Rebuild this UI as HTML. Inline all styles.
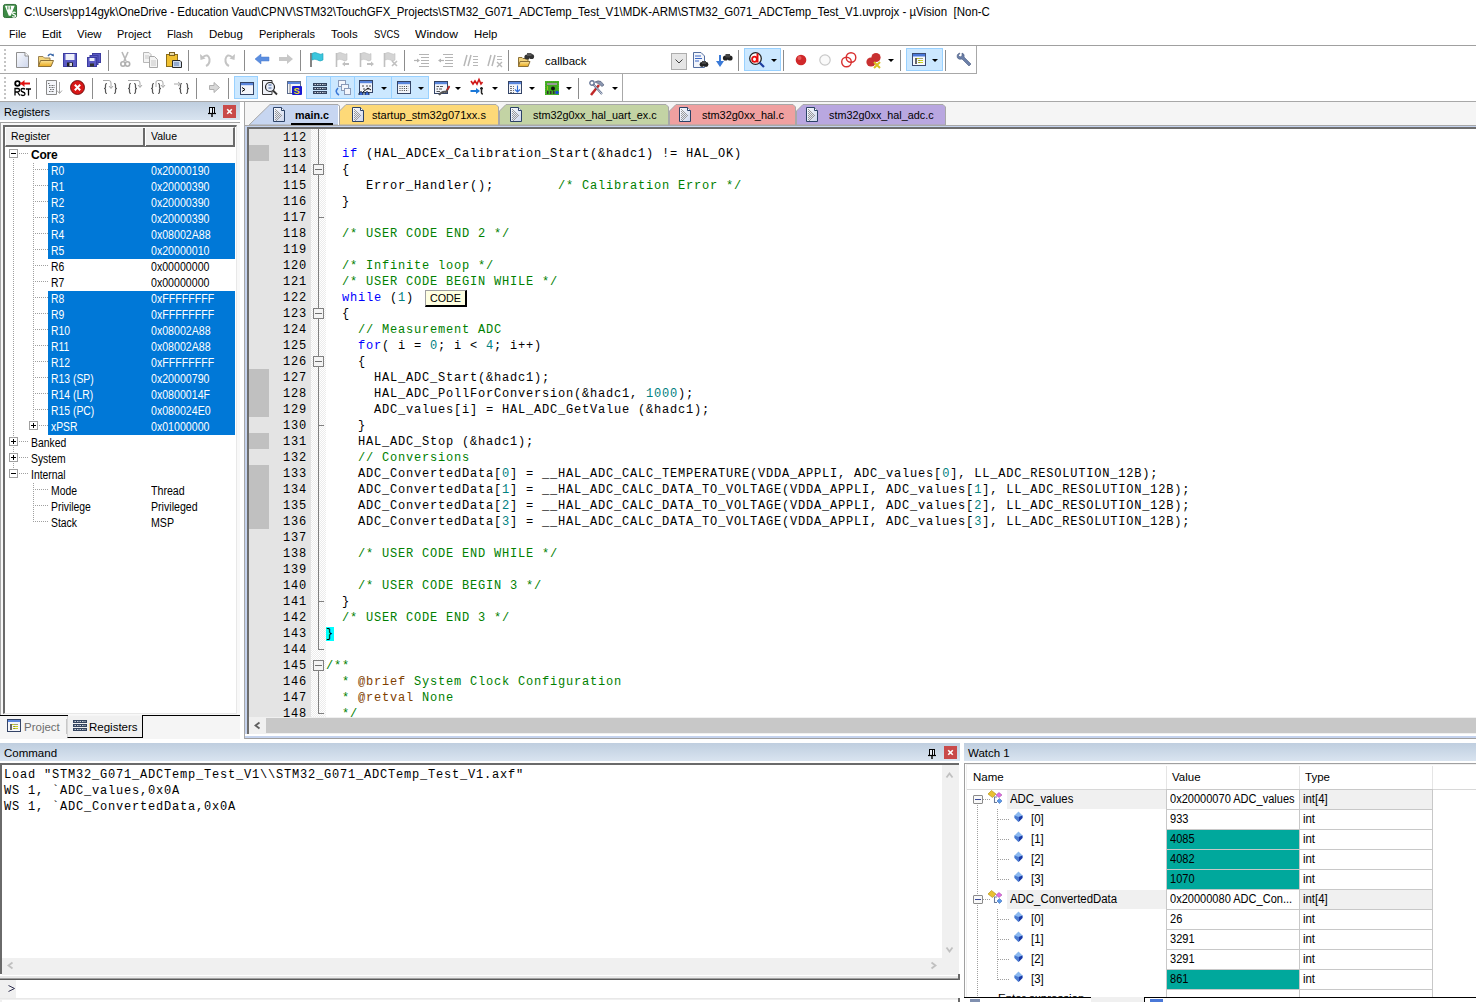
<!DOCTYPE html>
<html><head><meta charset="utf-8"><style>

*{margin:0;padding:0;box-sizing:border-box}
html,body{width:1476px;height:1002px;overflow:hidden;background:#fff;position:relative}
body{font-family:"Liberation Sans",sans-serif;font-size:11.5px;color:#000}
.a{position:absolute}
.t{position:absolute;white-space:pre;line-height:1}
.mono{font-family:"Liberation Mono",monospace}
svg{position:absolute;overflow:visible}


.hl{position:absolute;background:#cce8ff;border:1px solid #99d1ff}
.dd{position:absolute;width:0;height:0;border-left:3px solid transparent;border-right:3px solid transparent;border-top:3px solid #000}


.ttl{position:absolute;height:18px;background:linear-gradient(#bfcedf,#d9e4f0)}
.ttl .t{top:5px}
.closeb{position:absolute;width:13px;height:13px;background:#c94a4a}
.row{position:absolute;height:16px;line-height:16px;white-space:pre}
.dotv{position:absolute;width:1px;background-image:linear-gradient(#a0a0a0 50%,transparent 50%);background-size:1px 2px}
.doth{position:absolute;height:1px;background-image:linear-gradient(90deg,#a0a0a0 50%,transparent 50%);background-size:2px 1px}
.exp{position:absolute;width:9px;height:9px;border:1px solid #a0a0a0;background:#fff}
.exp:before{content:"";position:absolute;left:1px;top:3px;width:5px;height:1px;background:#000}
.exp.plus:after{content:"";position:absolute;left:3px;top:1px;width:1px;height:5px;background:#000}


.code{position:absolute;left:326px;height:16px;line-height:16px;font-family:"Liberation Mono",monospace;font-size:12px;letter-spacing:0.8px;white-space:pre;color:#000}
.ln{position:absolute;left:251px;width:56px;text-align:right;height:16px;line-height:16px;font-family:"Liberation Mono",monospace;font-size:12px;letter-spacing:0.8px;white-space:pre;color:#000}
.kw{color:#0000ff}.nm{color:#008080}.cm{color:#008000}.dc{color:#804000}
.checker{position:absolute;background-color:#fff;background-image:linear-gradient(45deg,#ececec 25%,transparent 25%,transparent 75%,#ececec 75%),linear-gradient(45deg,#ececec 25%,transparent 25%,transparent 75%,#ececec 75%);background-size:2px 2px;background-position:0 0,1px 1px}
.fbox{position:absolute;width:11px;height:11px;border:1px solid #808080;background:#f4f4f4}
.fbox:before{content:"";position:absolute;left:1px;top:4px;width:7px;height:1px;background:#707070}


.cmd{position:absolute;left:4px;height:16px;line-height:18px;font-family:"Liberation Mono",monospace;font-size:12px;letter-spacing:0.8px;white-space:pre;color:#000}


.wrow{position:absolute;height:20px;line-height:18px;white-space:pre;font-size:12px;transform-origin:0 0}

</style></head><body>
<div class="a" style="left:0;top:0;width:1476px;height:45px;background:#fff"></div>
<svg style="left:3px;top:4px" width="14" height="14" viewBox="0 0 15 15">
<rect x="0.5" y="0.5" width="14" height="14" rx="2" fill="#3d8a45" stroke="#2a6a32"/>
<path d="M2 2 H12.5 L8.3 12.5 H6.2 Z" fill="#fff"/>
<path d="M5.2 2.5 V6 M7.8 2.5 V6" stroke="#3d8a45" stroke-width="1.1"/>
<path d="M13.5 9.3 Q12.8 8.6 11.8 8.6 Q10.3 8.6 10.3 9.9 Q10.3 11 11.8 11.3 Q13.4 11.6 13.4 12.8 Q13.4 14 11.8 14 Q10.6 14 10 13.2" fill="none" stroke="#fff" stroke-width="1.3"/>
</svg>
<div class="t" style="left:24px;top:6px;font-size:12.5px;transform:scaleX(0.9191);transform-origin:0 0;">C:\Users\pp14gyk\OneDrive - Education Vaud\CPNV\STM32\TouchGFX_Projects\STM32_G071_ADCTemp_Test_V1\MDK-ARM\STM32_G071_ADCTemp_Test_V1.uvprojx - µVision  [Non-C</div>
<div class="t" style="left:9px;top:29px;font-size:11.5px;transform:scaleX(0.9297);transform-origin:0 0;">File</div>
<div class="t" style="left:42px;top:29px;font-size:11.5px;transform:scaleX(0.9823);transform-origin:0 0;">Edit</div>
<div class="t" style="left:77px;top:29px;font-size:11.5px;transform:scaleX(0.9920);transform-origin:0 0;">View</div>
<div class="t" style="left:117px;top:29px;font-size:11.5px;transform:scaleX(0.9510);transform-origin:0 0;">Project</div>
<div class="t" style="left:167px;top:29px;font-size:11.5px;transform:scaleX(0.9250);transform-origin:0 0;">Flash</div>
<div class="t" style="left:209px;top:29px;font-size:11.5px;transform:scaleX(1.0000);transform-origin:0 0;">Debug</div>
<div class="t" style="left:259px;top:29px;font-size:11.5px;transform:scaleX(0.9614);transform-origin:0 0;">Peripherals</div>
<div class="t" style="left:331px;top:29px;font-size:11.5px;transform:scaleX(0.9907);transform-origin:0 0;">Tools</div>
<div class="t" style="left:374px;top:29px;font-size:11.5px;transform:scaleX(0.8160);transform-origin:0 0;">SVCS</div>
<div class="t" style="left:415px;top:29px;font-size:11.5px;transform:scaleX(1.0488);transform-origin:0 0;">Window</div>
<div class="t" style="left:474px;top:29px;font-size:11.5px;transform:scaleX(0.9895);transform-origin:0 0;">Help</div>
<svg width="0" height="0" style="position:absolute">
<defs>
<linearGradient id="gdoc" x1="0" y1="0" x2="1" y2="1"><stop offset="0" stop-color="#fafbfe"/><stop offset="1" stop-color="#cdd6ec"/></linearGradient>
<linearGradient id="gfold" x1="0" y1="0" x2="0" y2="1"><stop offset="0" stop-color="#fbe49a"/><stop offset="1" stop-color="#e9a91c"/></linearGradient>
<linearGradient id="gtitle" x1="0" y1="0" x2="0" y2="1"><stop offset="0" stop-color="#bfcfe0"/><stop offset="1" stop-color="#dae5f1"/></linearGradient>
</defs></svg>
<div class="a" style="left:0;top:45px;width:1476px;height:1px;background:#a0a0a0"></div>
<div class="a" style="left:0;top:46px;width:977px;height:28px;border-right:1px solid #a8a8a8;border-bottom:1px solid #a8a8a8;background:#fff"></div>
<div class="a" style="left:4px;top:49px;width:2px;height:2px;background:#c4c4c4"></div><div class="a" style="left:4px;top:53px;width:2px;height:2px;background:#c4c4c4"></div><div class="a" style="left:4px;top:57px;width:2px;height:2px;background:#c4c4c4"></div><div class="a" style="left:4px;top:61px;width:2px;height:2px;background:#c4c4c4"></div><div class="a" style="left:4px;top:65px;width:2px;height:2px;background:#c4c4c4"></div><div class="a" style="left:4px;top:69px;width:2px;height:2px;background:#c4c4c4"></div>
<svg style="left:16px;top:52px" width="16" height="16" viewBox="0 0 16 16"><path d="M0.5 0.5 H9 L12.5 4 V15.5 H0.5 Z" fill="url(#gdoc)" stroke="#8f8f8f"/><path d="M9 0.5 V4 H12.5" fill="#fff" stroke="#8f8f8f"/></svg>
<svg style="left:38px;top:52px" width="16" height="16" viewBox="0 0 16 16"><path d="M0.5 4.5 H5 L6.5 6 H12 V14.5 H0.5 Z" fill="#f5d77e" stroke="#9c8250"/><path d="M2.5 8.5 H15.5 L13 14.5 H0.5 Z" fill="url(#gfold)" stroke="#8d7137"/><path d="M10 4 Q12.5 0.5 15 3.5" fill="none" stroke="#3a67a8" stroke-width="1.4"/><path d="M13.2 3.6 L16 4.5 L15.5 1.5Z" fill="#3a67a8"/></svg>
<svg style="left:63px;top:53px" width="16" height="16" viewBox="0 0 16 16"><rect x="0.5" y="0.5" width="13" height="13" fill="#5b5bc4" stroke="#3c3ca0"/><rect x="2.5" y="1" width="9" height="6" fill="#eef0fa"/><rect x="4" y="9.5" width="6" height="4" fill="#222"/><rect x="6.5" y="10" width="2.5" height="3" fill="#ddd"/></svg>
<svg style="left:87px;top:53px" width="16" height="16" viewBox="0 0 16 16"><rect x="5.5" y="0.5" width="8" height="9" fill="#5b5bc4" stroke="#3c3ca0"/><rect x="3" y="2.5" width="8" height="9" fill="#5b5bc4" stroke="#3c3ca0"/><rect x="0.5" y="4.5" width="9" height="9" fill="#5b5bc4" stroke="#3c3ca0"/><rect x="2.5" y="5" width="5" height="3" fill="#eef0fa"/><rect x="3" y="10.5" width="4" height="3" fill="#333"/></svg>
<div class="a" style="left:108px;top:50px;width:1px;height:21px;background:#8c8c8c"></div>
<svg style="left:120px;top:52px" width="11" height="16" viewBox="0 0 11 16"><path d="M2 0 L6 9 M8 0 L4 9" stroke="#b8b8b8" stroke-width="1.6" fill="none"/><circle cx="3" cy="12" r="2.2" fill="none" stroke="#b0b0b0" stroke-width="1.6"/><circle cx="7.5" cy="12" r="2.2" fill="none" stroke="#b0b0b0" stroke-width="1.6"/></svg>
<svg style="left:143px;top:52px" width="16" height="16" viewBox="0 0 16 16"><path d="M0.5 0.5 H6 L8 2.5 V10.5 H0.5Z" fill="#f4f4f4" stroke="#b8b8b8"/><path d="M6.5 4.5 H11.5 L14.5 7.5 V15.5 H6.5Z" fill="#f4f4f4" stroke="#a8a8a8"/><path d="M8 9 H13 M8 11 H13 M8 13 H13 M2 4 H6 M2 6 H6" stroke="#c8c8c8"/></svg>
<svg style="left:166px;top:52px" width="16" height="16" viewBox="0 0 16 16"><rect x="0.5" y="2.5" width="11" height="12" fill="#f0c030" stroke="#8a6d1a"/><rect x="3.5" y="0.5" width="5" height="3" fill="#e8d9a0" stroke="#7a6020"/><path d="M6.5 8.5 H14 L15.5 10 V15.5 H6.5Z" fill="#d0dcee" stroke="#2a2a2a"/><path d="M8 11 H13 M8 13 H13" stroke="#5a7ab0"/></svg>
<div class="a" style="left:188px;top:50px;width:1px;height:21px;background:#8c8c8c"></div>
<svg style="left:200px;top:53px" width="11" height="14" viewBox="0 0 11 14"><path d="M3 4 Q8 0 9.5 6 Q10 11 6 13" fill="none" stroke="#c4c4c4" stroke-width="2"/><path d="M0 1 L0.5 7 L5.5 5.5Z" fill="#c4c4c4"/></svg>
<svg style="left:224px;top:53px" width="11" height="14" viewBox="0 0 11 14"><path d="M8 4 Q3 0 1.5 6 Q1 11 5 13" fill="none" stroke="#c4c4c4" stroke-width="2"/><path d="M11 1 L10.5 7 L5.5 5.5Z" fill="#c4c4c4"/></svg>
<div class="a" style="left:244px;top:50px;width:1px;height:21px;background:#8c8c8c"></div>
<svg style="left:255px;top:54px" width="14" height="10" viewBox="0 0 14 10"><path d="M0 5 L6 0 V3 H14 V7 H6 V10Z" fill="#5b8ee0" stroke="#4a7acc" stroke-width="0.5"/></svg>
<svg style="left:279px;top:54px" width="14" height="10" viewBox="0 0 14 10"><path d="M14 5 L8 0 V3 H0 V7 H8 V10Z" fill="#c8c8c8"/></svg>
<div class="a" style="left:300px;top:50px;width:1px;height:21px;background:#8c8c8c"></div>
<svg style="left:310px;top:52px" width="16" height="16" viewBox="0 0 16 16"><path d="M1 1 V15" stroke="#666" stroke-width="1.6"/><path d="M2 1.5 Q5 -0.5 8 1.5 Q11 3 13 1.5 V8 Q10 10 7.5 8 Q5 6.5 2 8Z" fill="#3cc6dd" stroke="#1aa0b8" stroke-width="0.6"/></svg>
<svg style="left:335px;top:52px" width="16" height="16" viewBox="0 0 16 16"><path d="M1.5 1 V15" stroke="#c0c0c0" stroke-width="1.6"/><path d="M2 1.5 Q5 -0.5 8 1.5 Q11 3 12 1.5 V8 Q10 10 7.5 8 Q5 6.5 2 8Z" fill="#d4d4d4" stroke="#c0c0c0" stroke-width="0.6"/><path d="M7 12 L10 9.5 V11 H14 V13 H10 V14.5Z" fill="#c0c0c0"/></svg>
<svg style="left:359px;top:52px" width="16" height="16" viewBox="0 0 16 16"><path d="M1.5 1 V15" stroke="#c0c0c0" stroke-width="1.6"/><path d="M2 1.5 Q5 -0.5 8 1.5 Q11 3 12 1.5 V8 Q10 10 7.5 8 Q5 6.5 2 8Z" fill="#d4d4d4" stroke="#c0c0c0" stroke-width="0.6"/><path d="M15 12 L12 9.5 V11 H8 V13 H12 V14.5Z" fill="#c0c0c0"/></svg>
<svg style="left:383px;top:52px" width="16" height="16" viewBox="0 0 16 16"><path d="M1.5 1 V15" stroke="#c0c0c0" stroke-width="1.6"/><path d="M2 1.5 Q5 -0.5 8 1.5 Q11 3 12 1.5 V8 Q10 10 7.5 8 Q5 6.5 2 8Z" fill="#d4d4d4" stroke="#c0c0c0" stroke-width="0.6"/><path d="M9 9 L14 14 M14 9 L9 14" stroke="#c0c0c0" stroke-width="1.6"/></svg>
<div class="a" style="left:404px;top:50px;width:1px;height:21px;background:#8c8c8c"></div>
<svg style="left:414px;top:52px" width="16" height="16" viewBox="0 0 16 16"><path d="M5 2.5 H15 M7 5.5 H15 M7 8.5 H15 M7 11.5 H15 M5 14.5 H15" stroke="#b4b4b4" stroke-width="1.2"/><path d="M0 8.5 H5" stroke="#b4b4b4" stroke-width="1.2"/><path d="M3 6.5 L6 8.5 L3 10.5Z" fill="#b4b4b4"/></svg>
<svg style="left:438px;top:52px" width="16" height="16" viewBox="0 0 16 16"><path d="M5 2.5 H15 M7 5.5 H15 M7 8.5 H15 M7 11.5 H15 M5 14.5 H15" stroke="#b4b4b4" stroke-width="1.2"/><path d="M1 8.5 H6" stroke="#b4b4b4" stroke-width="1.2"/><path d="M3 6.5 L0 8.5 L3 10.5Z" fill="#b4b4b4"/></svg>
<svg style="left:463px;top:52px" width="16" height="16" viewBox="0 0 16 16"><path d="M4 3 L1 14 M8 3 L5 14" stroke="#b8b8b8" stroke-width="1.5"/><path d="M10 4.5 H15 M10 7.5 H15 M10 10.5 H15 M10 13.5 H15" stroke="#b8b8b8" stroke-width="1.2"/></svg>
<svg style="left:487px;top:52px" width="16" height="16" viewBox="0 0 16 16"><path d="M4 3 L1 14 M8 3 L5 14" stroke="#b8b8b8" stroke-width="1.5"/><path d="M10 4.5 H15 M10 7.5 H15" stroke="#b8b8b8" stroke-width="1.2"/><path d="M10 10 L15 15 M15 10 L10 15" stroke="#b8b8b8" stroke-width="1.4"/></svg>
<div class="a" style="left:508px;top:50px;width:1px;height:21px;background:#8c8c8c"></div>
<svg style="left:518px;top:52px" width="16" height="16" viewBox="0 0 16 16"><path d="M0.5 5.5 H4 L5 6.5 H10 V14.5 H0.5Z" fill="#f3d37a" stroke="#8d7137"/><path d="M2 9.5 H12 L10 14.5 H0.5Z" fill="url(#gfold)" stroke="#8d7137"/><circle cx="9" cy="5" r="2.6" fill="#333"/><circle cx="13.5" cy="4.5" r="2.6" fill="#333"/><rect x="9" y="1" width="4.5" height="3" fill="#555"/></svg>
<div class="t" style="left:545px;top:56px">callback</div>
<div class="a" style="left:671px;top:53px;width:16px;height:17px;background:#e6e6e6;border:1px solid #adadad"></div>
<svg style="left:675px;top:59px" width="8" height="5" viewBox="0 0 8 5"><path d="M0.5 0.5 L4 4 L7.5 0.5" fill="none" stroke="#404040" stroke-width="1"/></svg>
<svg style="left:693px;top:52px" width="16" height="16" viewBox="0 0 16 16"><path d="M0.5 0.5 H8 L11.5 4 V15.5 H0.5Z" fill="#f2f5fb" stroke="#556fa0"/><path d="M2 4 H8 M2 6.5 H9 M2 9 H6" stroke="#3a66c4"/><circle cx="9" cy="12.5" r="2.4" fill="#222"/><circle cx="13" cy="12.5" r="2.4" fill="#222"/><rect x="9" y="9" width="4" height="3" fill="#444"/></svg>
<svg style="left:716px;top:52px" width="16" height="16" viewBox="0 0 16 16"><path d="M3 3 V9 H0 L4 15 L8 9 H5 V3Z" fill="#3a7ad8"/><circle cx="9.5" cy="6" r="2.6" fill="#222"/><circle cx="14" cy="6" r="2.6" fill="#222"/><rect x="9.5" y="2" width="4.5" height="3.5" fill="#444"/></svg>
<div class="a" style="left:738px;top:50px;width:1px;height:21px;background:#8c8c8c"></div>
<div class="hl" style="left:744px;top:48px;width:37px;height:23px"></div>
<svg style="left:749px;top:52px" width="16" height="16" viewBox="0 0 16 16"><circle cx="6.5" cy="6.5" r="5.8" fill="#fff" stroke="#222" stroke-width="1.3"/><path d="M10.5 10.5 L15 15" stroke="#1f3fa0" stroke-width="2.2"/><path d="M8.5 1.5 V10.5" stroke="#e81010" stroke-width="2"/><ellipse cx="5.5" cy="7.3" rx="2.4" ry="2.6" fill="none" stroke="#e81010" stroke-width="1.8"/></svg>
<div class="dd" style="left:771px;top:59px"></div>
<div class="a" style="left:783px;top:50px;width:1px;height:21px;background:#8c8c8c"></div>
<svg style="left:795px;top:54px" width="12" height="12" viewBox="0 0 12 12"><circle cx="6" cy="6" r="5.3" fill="#d0282a"/><circle cx="4.5" cy="4" r="2" fill="#ef7070" opacity="0.7"/></svg>
<svg style="left:819px;top:54px" width="12" height="12" viewBox="0 0 12 12"><circle cx="6" cy="6" r="5.2" fill="#fafafa" stroke="#c8c8c8" stroke-width="1.2"/></svg>
<svg style="left:841px;top:52px" width="16" height="16" viewBox="0 0 16 16"><circle cx="5.5" cy="10" r="4.8" fill="#fff" stroke="#d83030" stroke-width="1.4"/><circle cx="10" cy="5.5" r="4.8" fill="none" stroke="#d83030" stroke-width="1.4"/></svg>
<svg style="left:866px;top:52px" width="16" height="16" viewBox="0 0 16 16"><circle cx="5" cy="10" r="4.6" fill="#c83030"/><circle cx="10" cy="5.5" r="4.6" fill="#c83030"/><path d="M8 10 L14 16 M14 10 L8 16" stroke="#d8c020" stroke-width="2"/></svg>
<div class="dd" style="left:888px;top:59px"></div>
<div class="a" style="left:900px;top:50px;width:1px;height:21px;background:#8c8c8c"></div>
<div class="hl" style="left:906px;top:48px;width:37px;height:23px"></div>
<svg style="left:912px;top:53px" width="14" height="13" viewBox="0 0 14 13"><rect x="0.5" y="0.5" width="13" height="12" fill="#f6f8fc" stroke="#3a4a70"/><rect x="1" y="1" width="12" height="2.5" fill="#4a78d8"/><path d="M4.5 5.5 H7 M6 7.5 H11 M6 9.5 H11" stroke="#c8d020" stroke-width="1"/><path d="M7 5.5 H11 M6.5 7.5 H8 M6.5 9.5 H8" stroke="#707020" stroke-width="1" opacity="0.6"/><path d="M3.5 5 V11 M4.5 5 V11" stroke="#444" stroke-width="0.8"/></svg>
<div class="dd" style="left:932px;top:59px"></div>
<div class="a" style="left:945px;top:50px;width:1px;height:21px;background:#8c8c8c"></div>
<svg style="left:956px;top:52px" width="16" height="16" viewBox="0 0 16 16"><path d="M4 1 Q0 2 1.5 6 Q3 8 6 7 L13 14 L15 12 L8 5 Q9 2 6 1 L6 4 L4 5 L2.5 3.5Z" fill="#6b7fa8" stroke="#4a5a80" stroke-width="0.6"/></svg>
<div class="a" style="left:0;top:74px;width:623px;height:28px;border-right:1px solid #a8a8a8;border-bottom:1px solid #a8a8a8;background:#fff"></div>
<div class="a" style="left:623px;top:101px;width:853px;height:1px;background:#a8a8a8"></div>
<div class="a" style="left:4px;top:77px;width:2px;height:2px;background:#c4c4c4"></div><div class="a" style="left:4px;top:81px;width:2px;height:2px;background:#c4c4c4"></div><div class="a" style="left:4px;top:85px;width:2px;height:2px;background:#c4c4c4"></div><div class="a" style="left:4px;top:89px;width:2px;height:2px;background:#c4c4c4"></div><div class="a" style="left:4px;top:93px;width:2px;height:2px;background:#c4c4c4"></div><div class="a" style="left:4px;top:97px;width:2px;height:2px;background:#c4c4c4"></div>
<svg style="left:14px;top:80px" width="17" height="16" viewBox="0 0 17 16"><circle cx="3.5" cy="3.5" r="2.3" fill="#fff" stroke="#000" stroke-width="1.8"/><path d="M6 3.5 H16" stroke="#e01010" stroke-width="2"/><path d="M6.5 3.5 L10.5 0 V7Z" fill="#e01010"/><path d="M1 15.5 V8.5 H3.8 Q5.5 8.5 5.5 10.2 Q5.5 12 3.8 12 H1 M3.5 12 L5.8 15.5" fill="none" stroke="#000" stroke-width="1.3"/><path d="M11 9.3 Q10.5 8.5 9 8.5 Q7 8.5 7 10 Q7 11.5 9 12 Q11 12.5 11 14 Q11 15.5 9 15.5 Q7.3 15.5 6.8 14.5" fill="none" stroke="#000" stroke-width="1.3"/><path d="M12 9 H17 M14.5 9 V15.5" fill="none" stroke="#000" stroke-width="1.3"/></svg>
<div class="a" style="left:36px;top:78px;width:1px;height:21px;background:#8c8c8c"></div>
<svg style="left:46px;top:80px" width="17" height="15" viewBox="0 0 17 15"><path d="M0.5 0.5 H10.5 V14.5 H0.5Z" fill="#f4f6fa" stroke="#8a8a8a"/><path d="M2 3.5 H4 M3 5.5 H9 M3 7.5 H9 M4 9.5 H8 M3 11.5 H8" stroke="#707070" stroke-width="1" stroke-dasharray="1 0.5"/><path d="M13.5 2 V13 M11 10.5 L13.5 13.5 L16 10.5" fill="none" stroke="#a8a8a8"/></svg>
<svg style="left:70px;top:80px" width="15" height="15" viewBox="0 0 15 15"><circle cx="7.5" cy="7.5" r="7" fill="#d81818" stroke="#500" stroke-width="0.8"/><path d="M4.8 4.8 L10.2 10.2 M10.2 4.8 L4.8 10.2" stroke="#fff" stroke-width="2"/></svg>
<div class="a" style="left:92px;top:78px;width:1px;height:21px;background:#8c8c8c"></div>
<svg style="left:103px;top:79px" width="16" height="16" viewBox="0 0 16 16"><path d="M4 4.5 Q2.5 4.5 2.5 6 V8.5 Q2.5 9.5 1 9.5 Q2.5 9.5 2.5 10.5 V13 Q2.5 14.5 4 14.5" fill="none" stroke="#555" stroke-width="1.2"/><path d="M11 4.5 Q12.5 4.5 12.5 6 V8.5 Q12.5 9.5 14 9.5 Q12.5 9.5 12.5 10.5 V13 Q12.5 14.5 11 14.5" fill="none" stroke="#555" stroke-width="1.2"/><path d="M0 1.5 H6 Q8 1.5 8 4 V9 M6 7 L8 9.5 L10 7" fill="none" stroke="#a8a8a8"/></svg>
<svg style="left:127px;top:79px" width="16" height="16" viewBox="0 0 16 16"><path d="M4 4.5 Q2.5 4.5 2.5 6 V8.5 Q2.5 9.5 1 9.5 Q2.5 9.5 2.5 10.5 V13 Q2.5 14.5 4 14.5" fill="none" stroke="#555" stroke-width="1.2"/><path d="M7 4.5 Q8.5 4.5 8.5 6 V8.5 Q8.5 9.5 10 9.5 Q8.5 9.5 8.5 10.5 V13 Q8.5 14.5 7 14.5" fill="none" stroke="#555" stroke-width="1.2"/><path d="M1 1.5 H11 Q13 1.5 13 4 V8 M11 6 L13 8.5 L15 6" fill="none" stroke="#a8a8a8"/></svg>
<svg style="left:150px;top:79px" width="16" height="16" viewBox="0 0 16 16"><path d="M4 4.5 Q2.5 4.5 2.5 6 V8.5 Q2.5 9.5 1 9.5 Q2.5 9.5 2.5 10.5 V13 Q2.5 14.5 4 14.5" fill="none" stroke="#555" stroke-width="1.2"/><path d="M8 4.5 Q9.5 4.5 9.5 6 V8.5 Q9.5 9.5 11 9.5 Q9.5 9.5 9.5 10.5 V13 Q9.5 14.5 8 14.5" fill="none" stroke="#555" stroke-width="1.2"/><path d="M6 8 V3 Q6 1.5 8 1.5 H11 Q13 1.5 13 4 V8 M11 6 L13 8.5 L15 6" fill="none" stroke="#a8a8a8"/></svg>
<svg style="left:174px;top:79px" width="16" height="16" viewBox="0 0 16 16"><path d="M8 4.5 Q6.5 4.5 6.5 6 V8.5 Q6.5 9.5 5 9.5 Q6.5 9.5 6.5 10.5 V13 Q6.5 14.5 8 14.5" fill="none" stroke="#555" stroke-width="1.2"/><path d="M12 4.5 Q13.5 4.5 13.5 6 V8.5 Q13.5 9.5 15 9.5 Q13.5 9.5 13.5 10.5 V13 Q13.5 14.5 12 14.5" fill="none" stroke="#555" stroke-width="1.2"/><path d="M0 5 H6 M4 3 L6.5 5 L4 7" fill="none" stroke="#a8a8a8"/></svg>
<div class="a" style="left:196px;top:78px;width:1px;height:21px;background:#8c8c8c"></div>
<svg style="left:209px;top:82px" width="11" height="11" viewBox="0 0 11 11"><path d="M0.5 3.5 H5 V0.5 L10.5 5.5 L5 10.5 V7.5 H0.5Z" fill="#d8d8d8" stroke="#b0b0b0"/></svg>
<div class="a" style="left:228px;top:78px;width:1px;height:21px;background:#8c8c8c"></div>
<div class="hl" style="left:234px;top:76px;width:24px;height:23px"></div>
<svg style="left:240px;top:82px" width="14" height="13" viewBox="0 0 14 13"><rect x="0.5" y="0.5" width="13" height="12" fill="#f3f5fa" stroke="#344466"/><rect x="1" y="1" width="12" height="2.2" fill="#5a86dc"/><path d="M2 5.5 L5 7.5 L2 9.5" fill="none" stroke="#000" stroke-width="1"/></svg>
<svg style="left:262px;top:80px" width="16" height="16" viewBox="0 0 16 16"><path d="M0.5 0.5 H10 V14.5 H0.5Z" fill="#f0f2f8" stroke="#333"/><circle cx="8" cy="7" r="4.5" fill="#e8eef8" stroke="#222" stroke-width="1.2"/><path d="M6.5 5 H9.5 M6.5 8 H9.5" stroke="#3a5a9a" stroke-width="1.2"/><path d="M11 10.5 L15 14.5" stroke="#333" stroke-width="1.8"/></svg>
<svg style="left:287px;top:81px" width="16" height="15" viewBox="0 0 16 15"><rect x="0.5" y="0.5" width="13" height="12" fill="#f3f5fa" stroke="#5a6a8a"/><rect x="1" y="1" width="12" height="2" fill="#5a86dc"/><path d="M3 3 V12" stroke="#888"/><rect x="5" y="5" width="10" height="9" rx="1" fill="#1a1ad0"/><text x="6.6" y="13" font-family="Liberation Sans" font-weight="bold" font-size="9.5" fill="#f0e020">S</text></svg>
<div class="hl" style="left:306px;top:76px;width:123px;height:23px"></div>
<div class="a" style="left:330px;top:77px;width:1px;height:21px;background:#99d1ff"></div>
<div class="a" style="left:354px;top:77px;width:1px;height:21px;background:#99d1ff"></div>
<div class="a" style="left:391px;top:77px;width:1px;height:21px;background:#99d1ff"></div>
<svg style="left:313px;top:83px" width="14" height="12" viewBox="0 0 14 12"><rect x="0" y="0" width="14" height="3" fill="#34445e"/><rect x="0" y="4" width="14" height="3" fill="#34445e"/><rect x="0" y="8" width="14" height="3" fill="#34445e"/><path d="M1.5 1.5 H12.5 M1.5 5.5 H12.5 M1.5 9.5 H12.5" stroke="#c8cfd8" stroke-width="1" stroke-dasharray="1.5 1"/></svg>
<svg style="left:335px;top:80px" width="16" height="16" viewBox="0 0 16 16"><rect x="3.5" y="0.5" width="7" height="6" fill="#f4f6fb" stroke="#8a9ab8"/><rect x="6.5" y="4.5" width="7" height="6" fill="#f4f6fb" stroke="#8a9ab8"/><rect x="9.5" y="8.5" width="6" height="6" fill="#f4f6fb" stroke="#8a9ab8"/><path d="M3 8 Q-1 12 4 15" fill="none" stroke="#3a78d8" stroke-width="1.6"/></svg>
<svg style="left:359px;top:80px" width="16" height="16" viewBox="0 0 16 16"><rect x="0.5" y="0.5" width="13" height="12" fill="#f3f5fa" stroke="#344466"/><rect x="1" y="1" width="12" height="2.2" fill="#5a86dc"/><path d="M3 6 H5 M7 6 H9 M10 6 H12 M4 9 H6 M8 9 H10" stroke="#444"/><path d="M0 15 V13 Q2 10 4 13 V15 M6 15 V13 Q8 10 10 13 V15" fill="#3a6ad8" stroke="#111" stroke-width="0.8"/><path d="M4 12 L9 8 L12 10" fill="none" stroke="#111"/></svg>
<div class="dd" style="left:381px;top:87px"></div>
<svg style="left:397px;top:81px" width="14" height="13" viewBox="0 0 14 13"><rect x="0.5" y="0.5" width="13" height="12" fill="#f3f5fa" stroke="#344466"/><rect x="1" y="1" width="12" height="2.2" fill="#5a86dc"/><path d="M2.5 5.5 H11.5 M2.5 7.5 H11.5 M2.5 9.5 H11.5" stroke="#444" stroke-dasharray="1 1.2"/></svg>
<div class="dd" style="left:418px;top:87px"></div>
<svg style="left:434px;top:81px" width="16" height="16" viewBox="0 0 16 16"><rect x="0.5" y="0.5" width="13" height="12" fill="#f3f5fa" stroke="#344466"/><rect x="1" y="1" width="12" height="2.2" fill="#5a86dc"/><path d="M2.5 5.5 H5 M6 5.5 H9 M2.5 8 H4 M5 8 H8 M2.5 10.5 H6" stroke="#555"/><path d="M5 14 Q8 10 12 11 L15 6" fill="none" stroke="#555" stroke-width="2"/><path d="M13 9 L15.5 5" stroke="#c02020" stroke-width="1.6"/></svg>
<div class="dd" style="left:455px;top:87px"></div>
<svg style="left:470px;top:79px" width="16" height="16" viewBox="0 0 16 16"><path d="M1 2 L3 5 L5 2 L7 5 L9 0.5 L11 5 L12.5 3" fill="none" stroke="#d01818" stroke-width="1.6"/><path d="M0.5 12 H7" stroke="#1a78d8" stroke-width="2"/><path d="M6 9 L10 12 L6 15Z" fill="#1a78d8"/><path d="M11.5 8 V14 Q11.5 15 13 15 M10 9.5 H13" fill="none" stroke="#222" stroke-width="1.5"/></svg>
<div class="dd" style="left:492px;top:87px"></div>
<svg style="left:508px;top:81px" width="14" height="13" viewBox="0 0 14 13"><rect x="0.5" y="0.5" width="13" height="12" fill="#f3f5fa" stroke="#344466"/><rect x="1" y="1" width="12" height="2.2" fill="#5a86dc"/><path d="M2 5.5 H4 M5 5.5 H6 M2 7.5 H4 M5 7.5 H6 M2 9.5 H4 M5 9.5 H6 M2 11.5 H4 M5 11.5 H6" stroke="#555" stroke-width="0.8"/><path d="M9.5 4.5 V11 M7 8.5 L9.5 11 L12 8.5" fill="none" stroke="#2a6ad8" stroke-width="1.1"/></svg>
<div class="dd" style="left:529px;top:87px"></div>
<svg style="left:545px;top:81px" width="14" height="14" viewBox="0 0 14 14"><rect x="0" y="0" width="14" height="14" fill="#40a820"/><rect x="0.7" y="0.7" width="12.6" height="12.6" fill="none" stroke="#6ad040" stroke-width="0.6" stroke-dasharray="1 1"/><rect x="2" y="2" width="10" height="2" fill="#999"/><circle cx="8" cy="7.5" r="2" fill="#111"/><path d="M2 6 H3 M2 8 H3" stroke="#f0e020"/><rect x="2" y="10" width="1.5" height="3" fill="#333"/><rect x="5" y="10" width="1.5" height="3" fill="#333"/><rect x="8" y="10" width="1.5" height="3" fill="#333"/><circle cx="12" cy="11.5" r="1.8" fill="#1a4ad8"/></svg>
<div class="dd" style="left:566px;top:87px"></div>
<div class="a" style="left:578px;top:78px;width:1px;height:21px;background:#8c8c8c"></div>
<svg style="left:589px;top:80px" width="16" height="16" viewBox="0 0 16 16"><path d="M2 15 L10 5" stroke="#c02828" stroke-width="2.5"/><path d="M4 4 L13 14" stroke="#5a6a8a" stroke-width="2" /><path d="M4 4 L13 14" stroke="#e8ecf4" stroke-width="0.8"/><path d="M6 2 Q9 0 12 1.5 L15 5 L13 6.5 L10 4 Z" fill="#8a96b0" stroke="#4a5670" stroke-width="0.6"/><circle cx="3" cy="3" r="2.2" fill="none" stroke="#6a7a9a" stroke-width="1.4"/></svg>
<div class="dd" style="left:612px;top:87px"></div>
<div class="ttl" style="left:0;top:102px;width:240px"><div class="t" style="left:4px;top:5px;font-size:11.5px;transform:scaleX(0.945);transform-origin:0 0">Registers</div></div>
<svg style="left:208px;top:107px" width="8" height="10" viewBox="0 0 8 10"><rect x="1.5" y="0.5" width="5" height="6" fill="#e8eef6" stroke="#000" stroke-width="1"/><path d="M4.5 1 V6" stroke="#000" stroke-width="1"/><path d="M0 6.5 H8" stroke="#000" stroke-width="1.2"/><path d="M4 7 V10" stroke="#000" stroke-width="1.4"/></svg>
<div class="closeb" style="left:223px;top:105px"></div><svg style="left:223px;top:105px" width="13" height="13"><path d="M4.2 4.2 L8.8 8.8 M8.8 4.2 L4.2 8.8" stroke="#fff" stroke-width="1.6"/></svg>
<div class="a" style="left:240px;top:102px;width:4px;height:638px;background:#fff"></div>
<div class="a" style="left:244px;top:102px;width:1px;height:638px;background:#a8a8a8"></div>
<div class="a" style="left:0;top:120px;width:240px;height:2px;background:#fff"></div>
<div class="a" style="left:0;top:122px;width:240px;height:594px;background:#f8f8f8;border-top:1px solid #a0a0a0;border-left:1px solid #a8a8a8"></div>
<div class="a" style="left:3px;top:125px;width:234px;height:589px;background:#fff;border-top:2px solid #6a6a6a;border-left:2px solid #6a6a6a;border-right:1px solid #e8e8e8;border-bottom:1px solid #e8e8e8"></div>
<div class="a" style="left:5px;top:127px;width:230px;height:20px;background:#f0f0f0;border-top:1px solid #fff;border-left:1px solid #fff;border-bottom:2px solid #6a6a6a;border-right:2px solid #6a6a6a"></div>
<div class="a" style="left:143px;top:128px;width:2px;height:18px;background:#6a6a6a"></div>
<div class="a" style="left:145px;top:128px;width:1px;height:18px;background:#fff"></div>
<div class="t" style="left:11px;top:131px;transform:scaleX(0.91);transform-origin:0 0">Register</div>
<div class="t" style="left:151px;top:131px;transform:scaleX(0.91);transform-origin:0 0">Value</div>
<div class="dotv" style="left:13px;top:159px;height:316px"></div>
<div class="dotv" style="left:33px;top:163px;height:264px"></div>
<div class="dotv" style="left:33px;top:483px;height:40px"></div>
<div class="exp" style="left:9px;top:149px"></div>
<div class="doth" style="left:19px;top:153px;width:10px"></div>
<div class="row" style="left:31px;top:147px;font-weight:bold;font-size:12px;letter-spacing:-0.2px">Core</div>
<div class="a" style="left:48px;top:163px;width:187px;height:16px;background:#0078d7"></div>
<div class="doth" style="left:35px;top:169px;width:13px"></div>
<div class="row" style="left:51px;top:163px;color:#fff;font-size:12px;transform:scaleX(0.865);transform-origin:0 0">R0</div>
<div class="row" style="left:151px;top:163px;color:#fff;font-size:12px;transform:scaleX(0.885);transform-origin:0 0">0x20000190</div>
<div class="a" style="left:48px;top:179px;width:187px;height:16px;background:#0078d7"></div>
<div class="doth" style="left:35px;top:185px;width:13px"></div>
<div class="row" style="left:51px;top:179px;color:#fff;font-size:12px;transform:scaleX(0.865);transform-origin:0 0">R1</div>
<div class="row" style="left:151px;top:179px;color:#fff;font-size:12px;transform:scaleX(0.885);transform-origin:0 0">0x20000390</div>
<div class="a" style="left:48px;top:195px;width:187px;height:16px;background:#0078d7"></div>
<div class="doth" style="left:35px;top:201px;width:13px"></div>
<div class="row" style="left:51px;top:195px;color:#fff;font-size:12px;transform:scaleX(0.865);transform-origin:0 0">R2</div>
<div class="row" style="left:151px;top:195px;color:#fff;font-size:12px;transform:scaleX(0.885);transform-origin:0 0">0x20000390</div>
<div class="a" style="left:48px;top:211px;width:187px;height:16px;background:#0078d7"></div>
<div class="doth" style="left:35px;top:217px;width:13px"></div>
<div class="row" style="left:51px;top:211px;color:#fff;font-size:12px;transform:scaleX(0.865);transform-origin:0 0">R3</div>
<div class="row" style="left:151px;top:211px;color:#fff;font-size:12px;transform:scaleX(0.885);transform-origin:0 0">0x20000390</div>
<div class="a" style="left:48px;top:227px;width:187px;height:16px;background:#0078d7"></div>
<div class="doth" style="left:35px;top:233px;width:13px"></div>
<div class="row" style="left:51px;top:227px;color:#fff;font-size:12px;transform:scaleX(0.865);transform-origin:0 0">R4</div>
<div class="row" style="left:151px;top:227px;color:#fff;font-size:12px;transform:scaleX(0.885);transform-origin:0 0">0x08002A88</div>
<div class="a" style="left:48px;top:243px;width:187px;height:16px;background:#0078d7"></div>
<div class="doth" style="left:35px;top:249px;width:13px"></div>
<div class="row" style="left:51px;top:243px;color:#fff;font-size:12px;transform:scaleX(0.865);transform-origin:0 0">R5</div>
<div class="row" style="left:151px;top:243px;color:#fff;font-size:12px;transform:scaleX(0.885);transform-origin:0 0">0x20000010</div>
<div class="doth" style="left:35px;top:265px;width:13px"></div>
<div class="row" style="left:51px;top:259px;color:#000;font-size:12px;transform:scaleX(0.865);transform-origin:0 0">R6</div>
<div class="row" style="left:151px;top:259px;color:#000;font-size:12px;transform:scaleX(0.885);transform-origin:0 0">0x00000000</div>
<div class="doth" style="left:35px;top:281px;width:13px"></div>
<div class="row" style="left:51px;top:275px;color:#000;font-size:12px;transform:scaleX(0.865);transform-origin:0 0">R7</div>
<div class="row" style="left:151px;top:275px;color:#000;font-size:12px;transform:scaleX(0.885);transform-origin:0 0">0x00000000</div>
<div class="a" style="left:48px;top:291px;width:187px;height:16px;background:#0078d7"></div>
<div class="doth" style="left:35px;top:297px;width:13px"></div>
<div class="row" style="left:51px;top:291px;color:#fff;font-size:12px;transform:scaleX(0.865);transform-origin:0 0">R8</div>
<div class="row" style="left:151px;top:291px;color:#fff;font-size:12px;transform:scaleX(0.885);transform-origin:0 0">0xFFFFFFFF</div>
<div class="a" style="left:48px;top:307px;width:187px;height:16px;background:#0078d7"></div>
<div class="doth" style="left:35px;top:313px;width:13px"></div>
<div class="row" style="left:51px;top:307px;color:#fff;font-size:12px;transform:scaleX(0.865);transform-origin:0 0">R9</div>
<div class="row" style="left:151px;top:307px;color:#fff;font-size:12px;transform:scaleX(0.885);transform-origin:0 0">0xFFFFFFFF</div>
<div class="a" style="left:48px;top:323px;width:187px;height:16px;background:#0078d7"></div>
<div class="doth" style="left:35px;top:329px;width:13px"></div>
<div class="row" style="left:51px;top:323px;color:#fff;font-size:12px;transform:scaleX(0.865);transform-origin:0 0">R10</div>
<div class="row" style="left:151px;top:323px;color:#fff;font-size:12px;transform:scaleX(0.885);transform-origin:0 0">0x08002A88</div>
<div class="a" style="left:48px;top:339px;width:187px;height:16px;background:#0078d7"></div>
<div class="doth" style="left:35px;top:345px;width:13px"></div>
<div class="row" style="left:51px;top:339px;color:#fff;font-size:12px;transform:scaleX(0.865);transform-origin:0 0">R11</div>
<div class="row" style="left:151px;top:339px;color:#fff;font-size:12px;transform:scaleX(0.885);transform-origin:0 0">0x08002A88</div>
<div class="a" style="left:48px;top:355px;width:187px;height:16px;background:#0078d7"></div>
<div class="doth" style="left:35px;top:361px;width:13px"></div>
<div class="row" style="left:51px;top:355px;color:#fff;font-size:12px;transform:scaleX(0.865);transform-origin:0 0">R12</div>
<div class="row" style="left:151px;top:355px;color:#fff;font-size:12px;transform:scaleX(0.885);transform-origin:0 0">0xFFFFFFFF</div>
<div class="a" style="left:48px;top:371px;width:187px;height:16px;background:#0078d7"></div>
<div class="doth" style="left:35px;top:377px;width:13px"></div>
<div class="row" style="left:51px;top:371px;color:#fff;font-size:12px;transform:scaleX(0.865);transform-origin:0 0">R13 (SP)</div>
<div class="row" style="left:151px;top:371px;color:#fff;font-size:12px;transform:scaleX(0.885);transform-origin:0 0">0x20000790</div>
<div class="a" style="left:48px;top:387px;width:187px;height:16px;background:#0078d7"></div>
<div class="doth" style="left:35px;top:393px;width:13px"></div>
<div class="row" style="left:51px;top:387px;color:#fff;font-size:12px;transform:scaleX(0.865);transform-origin:0 0">R14 (LR)</div>
<div class="row" style="left:151px;top:387px;color:#fff;font-size:12px;transform:scaleX(0.885);transform-origin:0 0">0x0800014F</div>
<div class="a" style="left:48px;top:403px;width:187px;height:16px;background:#0078d7"></div>
<div class="doth" style="left:35px;top:409px;width:13px"></div>
<div class="row" style="left:51px;top:403px;color:#fff;font-size:12px;transform:scaleX(0.865);transform-origin:0 0">R15 (PC)</div>
<div class="row" style="left:151px;top:403px;color:#fff;font-size:12px;transform:scaleX(0.885);transform-origin:0 0">0x080024E0</div>
<div class="a" style="left:48px;top:419px;width:187px;height:16px;background:#0078d7"></div>
<div class="doth" style="left:35px;top:425px;width:13px"></div>
<div class="exp plus" style="left:29px;top:421px"></div>
<div class="row" style="left:51px;top:419px;color:#fff;font-size:12px;transform:scaleX(0.865);transform-origin:0 0">xPSR</div>
<div class="row" style="left:151px;top:419px;color:#fff;font-size:12px;transform:scaleX(0.885);transform-origin:0 0">0x01000000</div>
<div class="exp plus" style="left:9px;top:437px"></div>
<div class="doth" style="left:19px;top:441px;width:10px"></div>
<div class="row" style="left:31px;top:435px;font-size:12px;transform:scaleX(0.865);transform-origin:0 0">Banked</div>
<div class="exp plus" style="left:9px;top:453px"></div>
<div class="doth" style="left:19px;top:457px;width:10px"></div>
<div class="row" style="left:31px;top:451px;font-size:12px;transform:scaleX(0.865);transform-origin:0 0">System</div>
<div class="exp" style="left:9px;top:469px"></div>
<div class="doth" style="left:19px;top:473px;width:10px"></div>
<div class="row" style="left:31px;top:467px;font-size:12px;transform:scaleX(0.865);transform-origin:0 0">Internal</div>
<div class="doth" style="left:35px;top:489px;width:13px"></div>
<div class="row" style="left:51px;top:483px;color:#000;font-size:12px;transform:scaleX(0.865);transform-origin:0 0">Mode</div>
<div class="row" style="left:151px;top:483px;color:#000;font-size:12px;transform:scaleX(0.885);transform-origin:0 0">Thread</div>
<div class="doth" style="left:35px;top:505px;width:13px"></div>
<div class="row" style="left:51px;top:499px;color:#000;font-size:12px;transform:scaleX(0.865);transform-origin:0 0">Privilege</div>
<div class="row" style="left:151px;top:499px;color:#000;font-size:12px;transform:scaleX(0.885);transform-origin:0 0">Privileged</div>
<div class="doth" style="left:35px;top:521px;width:13px"></div>
<div class="row" style="left:51px;top:515px;color:#000;font-size:12px;transform:scaleX(0.865);transform-origin:0 0">Stack</div>
<div class="row" style="left:151px;top:515px;color:#000;font-size:12px;transform:scaleX(0.885);transform-origin:0 0">MSP</div>
<div class="a" style="left:0;top:715px;width:240px;height:25px;background:#f5f5f5"></div>
<div class="a" style="left:0;top:715px;width:68px;height:1px;background:#000"></div>
<div class="a" style="left:142px;top:715px;width:98px;height:1px;background:#000"></div>
<div class="a" style="left:67px;top:716px;width:76px;height:22px;background:#f0f0f0;border-left:1px solid #d8d8d8;border-right:1px solid #000;border-bottom:1px solid #000"></div>
<svg style="left:7px;top:719px" width="14" height="13" viewBox="0 0 14 13"><rect x="0.5" y="0.5" width="13" height="12" fill="#f3f5fa" stroke="#344466"/><rect x="1" y="1" width="12" height="2" fill="#5a86dc"/><path d="M4.5 5.5 H7 M6 7.5 H11 M6 9.5 H11" stroke="#c8d020" stroke-width="1"/><path d="M7 5.5 H11 M6.5 7.5 H8 M6.5 9.5 H8" stroke="#707020" stroke-width="1" opacity="0.6"/><path d="M3.5 5 V11 M4.5 5 V11" stroke="#444" stroke-width="0.8"/></svg>
<div class="t" style="left:24px;top:722px;color:#6d6d6d">Project</div>
<div class="a" style="left:66px;top:719px;width:1px;height:15px;background:#c8c8c8"></div>
<svg style="left:73px;top:720px" width="14" height="12" viewBox="0 0 14 12"><rect x="0" y="0" width="14" height="3" fill="#34445e"/><rect x="0" y="4" width="14" height="3" fill="#34445e"/><rect x="0" y="8" width="14" height="3" fill="#34445e"/><path d="M1.5 1.5 H12.5 M1.5 5.5 H12.5 M1.5 9.5 H12.5" stroke="#c8cfd8" stroke-width="1" stroke-dasharray="1.5 1"/></svg>
<div class="t" style="left:89px;top:722px">Registers</div>
<div class="a" style="left:245px;top:102px;width:1231px;height:24px;background:#f5f5f5"></div>
<svg style="left:245px;top:102px" width="1231" height="27" viewBox="0 0 1231 27"><path d="M4 23 L25 2.5 H93 L94.5 4 V23Z" fill="#c7d6f1" stroke="#a8a8a8" stroke-width="1"/><path d="M93.5 4 V23" stroke="#fff" stroke-width="1"/><path d="M94.5 23 V9 L101 2.5 H251 L253.5 5 V23Z" fill="#fdd978" stroke="#a8a8a8" stroke-width="1"/><path d="M254.5 23 V9 L261 2.5 H421 L423.5 5 V23Z" fill="#c3d3a4" stroke="#a8a8a8" stroke-width="1"/><path d="M424.5 23 V9 L431 2.5 H548 L550.5 5 V23Z" fill="#f0a0a0" stroke="#a8a8a8" stroke-width="1"/><path d="M551.5 23 V9 L558 2.5 H698 L700.5 5 V23Z" fill="#b9a7e0" stroke="#a8a8a8" stroke-width="1"/></svg>
<div class="a" style="left:245px;top:125px;width:1231px;height:1px;background:#a8a8a8"></div>
<div class="a" style="left:245px;top:126px;width:1231px;height:2px;background:#c5d3ee"></div>
<svg style="left:273px;top:107px" width="12" height="15" viewBox="0 0 12 15"><path d="M0.5 0.5 H8.5 L11.5 3.5 V14.5 H0.5Z" fill="url(#gdoc)" stroke="#2c4266"/><path d="M2 2h1v1h-1zM3 3h1v1h-1zM2 4h1v1h-1zM4 4h1v1h-1zM3 5h1v1h-1zM5 5h1v1h-1zM2 6h1v1h-1zM4 6h1v1h-1zM6 6h1v1h-1zM3 7h1v1h-1zM5 7h1v1h-1zM7 7h1v1h-1zM2 8h1v1h-1zM4 8h1v1h-1zM6 8h1v1h-1zM8 8h1v1h-1zM3 9h1v1h-1zM5 9h1v1h-1zM7 9h1v1h-1zM2 10h1v1h-1zM4 10h1v1h-1zM6 10h1v1h-1zM3 11h1v1h-1zM5 11h1v1h-1zM2 12h1v1h-1zM4 12h1v1h-1zM3 13h1v1h-1z" fill="#9a9a9a"/><path d="M8.5 0.5 V3.5 H11.5" fill="#fff" stroke="#2c4266"/></svg>
<div class="t" style="left:295px;top:110px;font-weight:bold;font-size:11.5px;transform:scaleX(0.9315);transform-origin:0 0;">main.c</div>
<div class="a" style="left:291px;top:123px;width:42px;height:2px;background:#000"></div>
<svg style="left:352px;top:107px" width="12" height="15" viewBox="0 0 12 15"><path d="M0.5 0.5 H8.5 L11.5 3.5 V14.5 H0.5Z" fill="url(#gdoc)" stroke="#2c4266"/><path d="M2 2h1v1h-1zM3 3h1v1h-1zM2 4h1v1h-1zM4 4h1v1h-1zM3 5h1v1h-1zM5 5h1v1h-1zM2 6h1v1h-1zM4 6h1v1h-1zM6 6h1v1h-1zM3 7h1v1h-1zM5 7h1v1h-1zM7 7h1v1h-1zM2 8h1v1h-1zM4 8h1v1h-1zM6 8h1v1h-1zM8 8h1v1h-1zM3 9h1v1h-1zM5 9h1v1h-1zM7 9h1v1h-1zM2 10h1v1h-1zM4 10h1v1h-1zM6 10h1v1h-1zM3 11h1v1h-1zM5 11h1v1h-1zM2 12h1v1h-1zM4 12h1v1h-1zM3 13h1v1h-1z" fill="#9a9a9a"/><path d="M8.5 0.5 V3.5 H11.5" fill="#fff" stroke="#2c4266"/></svg>
<div class="t" style="left:372px;top:110px;font-size:11.5px;transform:scaleX(0.9580);transform-origin:0 0;">startup_stm32g071xx.s</div>
<svg style="left:510px;top:107px" width="12" height="15" viewBox="0 0 12 15"><path d="M0.5 0.5 H8.5 L11.5 3.5 V14.5 H0.5Z" fill="url(#gdoc)" stroke="#2c4266"/><path d="M2 2h1v1h-1zM3 3h1v1h-1zM2 4h1v1h-1zM4 4h1v1h-1zM3 5h1v1h-1zM5 5h1v1h-1zM2 6h1v1h-1zM4 6h1v1h-1zM6 6h1v1h-1zM3 7h1v1h-1zM5 7h1v1h-1zM7 7h1v1h-1zM2 8h1v1h-1zM4 8h1v1h-1zM6 8h1v1h-1zM8 8h1v1h-1zM3 9h1v1h-1zM5 9h1v1h-1zM7 9h1v1h-1zM2 10h1v1h-1zM4 10h1v1h-1zM6 10h1v1h-1zM3 11h1v1h-1zM5 11h1v1h-1zM2 12h1v1h-1zM4 12h1v1h-1zM3 13h1v1h-1z" fill="#9a9a9a"/><path d="M8.5 0.5 V3.5 H11.5" fill="#fff" stroke="#2c4266"/></svg>
<div class="t" style="left:533px;top:110px;font-size:11.5px;transform:scaleX(0.9435);transform-origin:0 0;">stm32g0xx_hal_uart_ex.c</div>
<svg style="left:679px;top:107px" width="12" height="15" viewBox="0 0 12 15"><path d="M0.5 0.5 H8.5 L11.5 3.5 V14.5 H0.5Z" fill="url(#gdoc)" stroke="#2c4266"/><path d="M2 2h1v1h-1zM3 3h1v1h-1zM2 4h1v1h-1zM4 4h1v1h-1zM3 5h1v1h-1zM5 5h1v1h-1zM2 6h1v1h-1zM4 6h1v1h-1zM6 6h1v1h-1zM3 7h1v1h-1zM5 7h1v1h-1zM7 7h1v1h-1zM2 8h1v1h-1zM4 8h1v1h-1zM6 8h1v1h-1zM8 8h1v1h-1zM3 9h1v1h-1zM5 9h1v1h-1zM7 9h1v1h-1zM2 10h1v1h-1zM4 10h1v1h-1zM6 10h1v1h-1zM3 11h1v1h-1zM5 11h1v1h-1zM2 12h1v1h-1zM4 12h1v1h-1zM3 13h1v1h-1z" fill="#9a9a9a"/><path d="M8.5 0.5 V3.5 H11.5" fill="#fff" stroke="#2c4266"/></svg>
<div class="t" style="left:702px;top:110px;font-size:11.5px;transform:scaleX(0.9507);transform-origin:0 0;">stm32g0xx_hal.c</div>
<svg style="left:806px;top:107px" width="12" height="15" viewBox="0 0 12 15"><path d="M0.5 0.5 H8.5 L11.5 3.5 V14.5 H0.5Z" fill="url(#gdoc)" stroke="#2c4266"/><path d="M2 2h1v1h-1zM3 3h1v1h-1zM2 4h1v1h-1zM4 4h1v1h-1zM3 5h1v1h-1zM5 5h1v1h-1zM2 6h1v1h-1zM4 6h1v1h-1zM6 6h1v1h-1zM3 7h1v1h-1zM5 7h1v1h-1zM7 7h1v1h-1zM2 8h1v1h-1zM4 8h1v1h-1zM6 8h1v1h-1zM8 8h1v1h-1zM3 9h1v1h-1zM5 9h1v1h-1zM7 9h1v1h-1zM2 10h1v1h-1zM4 10h1v1h-1zM6 10h1v1h-1zM3 11h1v1h-1zM5 11h1v1h-1zM2 12h1v1h-1zM4 12h1v1h-1zM3 13h1v1h-1z" fill="#9a9a9a"/><path d="M8.5 0.5 V3.5 H11.5" fill="#fff" stroke="#2c4266"/></svg>
<div class="t" style="left:829px;top:110px;font-size:11.5px;transform:scaleX(0.9402);transform-origin:0 0;">stm32g0xx_hal_adc.c</div>
<div class="a" style="left:245px;top:128px;width:1231px;height:612px;background:#fff"></div>
<div class="a" style="left:245px;top:126px;width:2px;height:612px;background:#c5d3ee"></div>
<div class="a" style="left:247px;top:127px;width:1229px;height:2px;background:#6e6e6e"></div>
<div class="a" style="left:247px;top:127px;width:2px;height:607px;background:#6e6e6e"></div>
<div class="a" style="left:249px;top:129px;width:62px;height:588px;background:#e4e4e4"></div>
<div class="checker" style="left:311px;top:129px;width:15px;height:588px"></div>
<div class="a" style="left:249px;top:145px;width:20px;height:16px;background:#c0c0c0"></div>
<div class="a" style="left:249px;top:369px;width:20px;height:16px;background:#c0c0c0"></div>
<div class="a" style="left:249px;top:385px;width:20px;height:16px;background:#c0c0c0"></div>
<div class="a" style="left:249px;top:401px;width:20px;height:16px;background:#c0c0c0"></div>
<div class="a" style="left:249px;top:433px;width:20px;height:16px;background:#c0c0c0"></div>
<div class="a" style="left:249px;top:465px;width:20px;height:16px;background:#c0c0c0"></div>
<div class="a" style="left:249px;top:481px;width:20px;height:16px;background:#c0c0c0"></div>
<div class="a" style="left:249px;top:497px;width:20px;height:16px;background:#c0c0c0"></div>
<div class="a" style="left:249px;top:513px;width:20px;height:16px;background:#c0c0c0"></div>
<div class="ln" style="top:130px">112</div>
<div class="ln" style="top:146px">113</div>
<div class="code" style="top:146px">  <span class="kw">if</span> (HAL_ADCEx_Calibration_Start(&amp;hadc1) != HAL_OK)</div>
<div class="ln" style="top:162px">114</div>
<div class="code" style="top:162px">  {</div>
<div class="ln" style="top:178px">115</div>
<div class="code" style="top:178px">     Error_Handler();        <span class="cm">/* Calibration Error */</span></div>
<div class="ln" style="top:194px">116</div>
<div class="code" style="top:194px">  }</div>
<div class="ln" style="top:210px">117</div>
<div class="ln" style="top:226px">118</div>
<div class="code" style="top:226px">  <span class="cm">/* USER CODE END 2 */</span></div>
<div class="ln" style="top:242px">119</div>
<div class="ln" style="top:258px">120</div>
<div class="code" style="top:258px">  <span class="cm">/* Infinite loop */</span></div>
<div class="ln" style="top:274px">121</div>
<div class="code" style="top:274px">  <span class="cm">/* USER CODE BEGIN WHILE */</span></div>
<div class="ln" style="top:290px">122</div>
<div class="code" style="top:290px">  <span class="kw">while</span> (<span class="nm">1</span>)</div>
<div class="ln" style="top:306px">123</div>
<div class="code" style="top:306px">  {</div>
<div class="ln" style="top:322px">124</div>
<div class="code" style="top:322px">    <span class="cm">// Measurement ADC</span></div>
<div class="ln" style="top:338px">125</div>
<div class="code" style="top:338px">    <span class="kw">for</span>( i = <span class="nm">0</span>; i &lt; <span class="nm">4</span>; i++)</div>
<div class="ln" style="top:354px">126</div>
<div class="code" style="top:354px">    {</div>
<div class="ln" style="top:370px">127</div>
<div class="code" style="top:370px">      HAL_ADC_Start(&amp;hadc1);</div>
<div class="ln" style="top:386px">128</div>
<div class="code" style="top:386px">      HAL_ADC_PollForConversion(&amp;hadc1, <span class="nm">1000</span>);</div>
<div class="ln" style="top:402px">129</div>
<div class="code" style="top:402px">      ADC_values[i] = HAL_ADC_GetValue (&amp;hadc1);</div>
<div class="ln" style="top:418px">130</div>
<div class="code" style="top:418px">    }</div>
<div class="ln" style="top:434px">131</div>
<div class="code" style="top:434px">    HAL_ADC_Stop (&amp;hadc1);</div>
<div class="ln" style="top:450px">132</div>
<div class="code" style="top:450px">    <span class="cm">// Conversions</span></div>
<div class="ln" style="top:466px">133</div>
<div class="code" style="top:466px">    ADC_ConvertedData[<span class="nm">0</span>] = __HAL_ADC_CALC_TEMPERATURE(VDDA_APPLI, ADC_values[<span class="nm">0</span>], LL_ADC_RESOLUTION_12B);</div>
<div class="ln" style="top:482px">134</div>
<div class="code" style="top:482px">    ADC_ConvertedData[<span class="nm">1</span>] = __HAL_ADC_CALC_DATA_TO_VOLTAGE(VDDA_APPLI, ADC_values[<span class="nm">1</span>], LL_ADC_RESOLUTION_12B);</div>
<div class="ln" style="top:498px">135</div>
<div class="code" style="top:498px">    ADC_ConvertedData[<span class="nm">2</span>] = __HAL_ADC_CALC_DATA_TO_VOLTAGE(VDDA_APPLI, ADC_values[<span class="nm">2</span>], LL_ADC_RESOLUTION_12B);</div>
<div class="ln" style="top:514px">136</div>
<div class="code" style="top:514px">    ADC_ConvertedData[<span class="nm">3</span>] = __HAL_ADC_CALC_DATA_TO_VOLTAGE(VDDA_APPLI, ADC_values[<span class="nm">3</span>], LL_ADC_RESOLUTION_12B);</div>
<div class="ln" style="top:530px">137</div>
<div class="ln" style="top:546px">138</div>
<div class="code" style="top:546px">    <span class="cm">/* USER CODE END WHILE */</span></div>
<div class="ln" style="top:562px">139</div>
<div class="ln" style="top:578px">140</div>
<div class="code" style="top:578px">    <span class="cm">/* USER CODE BEGIN 3 */</span></div>
<div class="ln" style="top:594px">141</div>
<div class="code" style="top:594px">  }</div>
<div class="ln" style="top:610px">142</div>
<div class="code" style="top:610px">  <span class="cm">/* USER CODE END 3 */</span></div>
<div class="ln" style="top:626px">143</div>
<div class="code" style="top:626px"><span style="background:#00ffff">}</span></div>
<div class="ln" style="top:642px">144</div>
<div class="ln" style="top:658px">145</div>
<div class="code" style="top:658px"><span class="cm">/**</span></div>
<div class="ln" style="top:674px">146</div>
<div class="code" style="top:674px"><span class="cm">  * </span><span class="dc">@brief</span><span class="cm"> System Clock Configuration</span></div>
<div class="ln" style="top:690px">147</div>
<div class="code" style="top:690px"><span class="cm">  * </span><span class="dc">@retval</span><span class="cm"> None</span></div>
<div class="ln" style="top:706px">148</div>
<div class="code" style="top:706px"><span class="cm">  */</span></div>
<div class="a" style="left:318px;top:129px;width:1px;height:521px;background:#808080"></div>
<div class="a" style="left:318px;top:217px;width:6px;height:1px;background:#808080"></div>
<div class="a" style="left:318px;top:425px;width:6px;height:1px;background:#808080"></div>
<div class="a" style="left:318px;top:601px;width:6px;height:1px;background:#808080"></div>
<div class="a" style="left:318px;top:649px;width:6px;height:1px;background:#808080"></div>
<div class="a" style="left:318px;top:671px;width:1px;height:43px;background:#808080"></div>
<div class="a" style="left:318px;top:713px;width:6px;height:1px;background:#808080"></div>
<div class="fbox" style="left:313px;top:164px"></div>
<div class="fbox" style="left:313px;top:308px"></div>
<div class="fbox" style="left:313px;top:356px"></div>
<div class="fbox" style="left:313px;top:660px"></div>
<div class="a" style="left:425px;top:290px;width:42px;height:17px;background:#ffffe1;border-top:1px solid #a0a0a0;border-left:1px solid #a0a0a0;border-right:2px solid #000;border-bottom:2px solid #000"></div>
<div class="t" style="left:430px;top:293px;font-size:11.5px;transform:scaleX(0.9323);transform-origin:0 0;">CODE</div>
<div class="a" style="left:249px;top:717px;width:1227px;height:17px;background:#f0f0f0"></div>
<div class="a" style="left:266px;top:718px;width:1210px;height:15px;background:#c8c8c8"></div>
<svg style="left:254px;top:722px" width="7" height="7" viewBox="0 0 7 7"><path d="M5.5 0.5 L1.5 3.5 L5.5 6.5" fill="none" stroke="#606060" stroke-width="1.8"/></svg>
<div class="a" style="left:245px;top:734px;width:1231px;height:2px;background:#fff"></div>
<div class="a" style="left:245px;top:736px;width:1231px;height:2px;background:#c5d3ee"></div>
<div class="a" style="left:245px;top:738px;width:1231px;height:1px;background:#a0a0a0"></div>
<div class="a" style="left:0;top:739px;width:1476px;height:263px;background:#fff"></div>
<div class="ttl" style="left:0;top:743px;width:960px"><div class="t" style="left:4px;top:5px">Command</div></div>
<svg style="left:928px;top:749px" width="8" height="10" viewBox="0 0 8 10"><rect x="1.5" y="0.5" width="5" height="6" fill="#e8eef6" stroke="#000" stroke-width="1"/><path d="M4.5 1 V6" stroke="#000" stroke-width="1"/><path d="M0 6.5 H8" stroke="#000" stroke-width="1.2"/><path d="M4 7 V10" stroke="#000" stroke-width="1.4"/></svg>
<div class="closeb" style="left:944px;top:746px"></div><svg style="left:944px;top:746px" width="13" height="13"><path d="M4.2 4.2 L8.8 8.8 M8.8 4.2 L4.2 8.8" stroke="#fff" stroke-width="1.6"/></svg>
<div class="a" style="left:0;top:763px;width:959px;height:2px;background:#6a6a6a"></div>
<div class="a" style="left:0;top:763px;width:2px;height:211px;background:#6a6a6a"></div>
<div class="a" style="left:942px;top:765px;width:17px;height:193px;background:#f0f0f0"></div>
<div class="a" style="left:2px;top:958px;width:957px;height:17px;background:#f0f0f0"></div>
<div class="a" style="left:0;top:976px;width:959px;height:2px;background:#e8e8e8"></div>
<div class="a" style="left:0;top:978px;width:960px;height:1px;background:#a0a0a0"></div>
<div class="a" style="left:0;top:979px;width:960px;height:1px;background:#5a5a5a"></div>
<div class="a" style="left:958px;top:974px;width:2px;height:6px;background:#6a6a6a"></div>
<svg style="left:946px;top:772px" width="7" height="7" viewBox="0 0 7 7"><path d="M0.5 5.5 L3.5 1.5 L6.5 5.5" fill="none" stroke="#c0c0c0" stroke-width="1.8"/></svg>
<svg style="left:946px;top:946px" width="7" height="7" viewBox="0 0 7 7"><path d="M0.5 1.5 L3.5 5.5 L6.5 1.5" fill="none" stroke="#c0c0c0" stroke-width="1.8"/></svg>
<svg style="left:7px;top:962px" width="7" height="7" viewBox="0 0 7 7"><path d="M5.5 0.5 L1.5 3.5 L5.5 6.5" fill="none" stroke="#c0c0c0" stroke-width="1.8"/></svg>
<svg style="left:930px;top:962px" width="7" height="7" viewBox="0 0 7 7"><path d="M1.5 0.5 L5.5 3.5 L1.5 6.5" fill="none" stroke="#c0c0c0" stroke-width="1.8"/></svg>
<div class="a" style="left:0;top:980px;width:16px;height:18px;background:#f0f0f0"></div>
<svg style="left:8px;top:985px" width="8" height="7" viewBox="0 0 8 7"><path d="M0.5 0.5 L6.5 3.5 L0.5 6.5" fill="none" stroke="#303050" stroke-width="1"/></svg>
<div class="a" style="left:0;top:998px;width:960px;height:1px;background:#e8e8e8"></div>
<div class="a" style="left:0;top:999px;width:959px;height:3px;background:#f0f0f0"></div><div class="a" style="left:2px;top:1000px;width:957px;height:2px;background:#fff"></div>
<div class="a" style="left:958px;top:998px;width:2px;height:4px;background:#6a6a6a"></div>
<div class="cmd" style="top:766px">Load "STM32_G071_ADCTemp_Test_V1\\STM32_G071_ADCTemp_Test_V1.axf"</div>
<div class="cmd" style="top:782px">WS 1, `ADC_values,0x0A</div>
<div class="cmd" style="top:798px">WS 1, `ADC_ConvertedData,0x0A</div>
<div class="ttl" style="left:964px;top:743px;width:512px"><div class="t" style="left:4px;top:5px">Watch 1</div></div>
<div class="a" style="left:964px;top:763px;width:512px;height:235px;background:#fff;border-top:1px solid #a0a0a0;border-left:1px solid #a0a0a0"></div>
<div class="a" style="left:966px;top:764px;width:510px;height:1px;background:#f0f0f0"></div>
<div class="a" style="left:966px;top:764px;width:1px;height:233px;background:#f0f0f0"></div>
<div class="t" style="left:973px;top:772px">Name</div>
<div class="t" style="left:1172px;top:772px">Value</div>
<div class="t" style="left:1305px;top:772px">Type</div>
<div class="a" style="left:1166px;top:766px;width:1px;height:23px;background:#e5e5e5"></div>
<div class="a" style="left:1299px;top:766px;width:1px;height:23px;background:#e5e5e5"></div>
<div class="a" style="left:1432px;top:766px;width:1px;height:23px;background:#e5e5e5"></div>
<div class="a" style="left:967px;top:789px;width:509px;height:1px;background:#d8d8d8"></div>
<div class="dotv" style="left:977px;top:805px;height:192px"></div>
<div class="dotv" style="left:997px;top:809px;height:72px"></div>
<div class="dotv" style="left:997px;top:909px;height:72px"></div>
<div class="a" style="left:1166px;top:809px;width:267px;height:1px;background:#c8c8c8"></div>
<div class="a" style="left:1007px;top:790px;width:159px;height:19px;background:#f0f0f0"></div>
<div class="a" style="left:1300px;top:790px;width:132px;height:19px;background:#f0f0f0"></div>
<div class="a" style="left:973px;top:795px;width:10px;height:9px;border:1px solid #8a8a8a;border-radius:1px;background:#f8f8f8"></div>
<div class="a" style="left:975px;top:799px;width:6px;height:1px;background:#3a4a9a"></div>
<div class="doth" style="left:983px;top:799px;width:7px"></div>
<svg style="left:987px;top:790px" width="16" height="14" viewBox="0 0 16 14"><path d="M1 4 L4.5 0.5 L9 4 L5.5 7.5Z" fill="#e8c030" stroke="#b08a10" stroke-width="0.6"/><path d="M9 5 L12 2.5 L15 5 L12 7.5Z" fill="#e070e0" stroke="#a040a0" stroke-width="0.5"/><path d="M10 7 H7.5 V12.5 H10" fill="none" stroke="#6a7a9a" stroke-width="1.1"/><path d="M10 11 L12.5 8.5 L15 11 L12.5 13.5Z" fill="#5a9ae8" stroke="#2a5ab0" stroke-width="0.5"/></svg>
<div class="wrow" style="left:1010px;top:790px;transform:scaleX(0.95)">ADC_values</div>
<div class="wrow" style="left:1170px;top:790px;transform:scaleX(0.92)">0x20000070 ADC_values</div>
<div class="wrow" style="left:1303px;top:790px;transform:scaleX(0.95)">int[4]</div>
<div class="a" style="left:1166px;top:829px;width:267px;height:1px;background:#c8c8c8"></div>
<div class="doth" style="left:998px;top:819px;width:12px"></div>
<svg style="left:1014px;top:811px" width="9" height="11" viewBox="0 0 9 11"><path d="M4.5 0.5 L8.5 4.5 L8.5 7 L4.5 11 L0.5 7 L0.5 4.5Z" fill="#8ab8f0"/><path d="M4.5 6 L8.5 4.5 L8.5 7 L4.5 11Z" fill="#1a3aa8"/><path d="M0.5 4.5 L4.5 6 L4.5 11 L0.5 7Z" fill="#4a7ad0"/></svg>
<div class="wrow" style="left:1031px;top:810px;transform:scaleX(0.95)">[0]</div>
<div class="wrow" style="left:1170px;top:810px;transform:scaleX(0.92)">933</div>
<div class="wrow" style="left:1303px;top:810px;transform:scaleX(0.95)">int</div>
<div class="a" style="left:1166px;top:849px;width:267px;height:1px;background:#c8c8c8"></div>
<div class="doth" style="left:998px;top:839px;width:12px"></div>
<svg style="left:1014px;top:831px" width="9" height="11" viewBox="0 0 9 11"><path d="M4.5 0.5 L8.5 4.5 L8.5 7 L4.5 11 L0.5 7 L0.5 4.5Z" fill="#8ab8f0"/><path d="M4.5 6 L8.5 4.5 L8.5 7 L4.5 11Z" fill="#1a3aa8"/><path d="M0.5 4.5 L4.5 6 L4.5 11 L0.5 7Z" fill="#4a7ad0"/></svg>
<div class="wrow" style="left:1031px;top:830px;transform:scaleX(0.95)">[1]</div>
<div class="a" style="left:1167px;top:830px;width:132px;height:19px;background:#00a89c"></div>
<div class="wrow" style="left:1170px;top:830px;transform:scaleX(0.92)">4085</div>
<div class="wrow" style="left:1303px;top:830px;transform:scaleX(0.95)">int</div>
<div class="a" style="left:1166px;top:869px;width:267px;height:1px;background:#c8c8c8"></div>
<div class="doth" style="left:998px;top:859px;width:12px"></div>
<svg style="left:1014px;top:851px" width="9" height="11" viewBox="0 0 9 11"><path d="M4.5 0.5 L8.5 4.5 L8.5 7 L4.5 11 L0.5 7 L0.5 4.5Z" fill="#8ab8f0"/><path d="M4.5 6 L8.5 4.5 L8.5 7 L4.5 11Z" fill="#1a3aa8"/><path d="M0.5 4.5 L4.5 6 L4.5 11 L0.5 7Z" fill="#4a7ad0"/></svg>
<div class="wrow" style="left:1031px;top:850px;transform:scaleX(0.95)">[2]</div>
<div class="a" style="left:1167px;top:850px;width:132px;height:19px;background:#00a89c"></div>
<div class="wrow" style="left:1170px;top:850px;transform:scaleX(0.92)">4082</div>
<div class="wrow" style="left:1303px;top:850px;transform:scaleX(0.95)">int</div>
<div class="a" style="left:1166px;top:889px;width:267px;height:1px;background:#c8c8c8"></div>
<div class="doth" style="left:998px;top:879px;width:12px"></div>
<svg style="left:1014px;top:871px" width="9" height="11" viewBox="0 0 9 11"><path d="M4.5 0.5 L8.5 4.5 L8.5 7 L4.5 11 L0.5 7 L0.5 4.5Z" fill="#8ab8f0"/><path d="M4.5 6 L8.5 4.5 L8.5 7 L4.5 11Z" fill="#1a3aa8"/><path d="M0.5 4.5 L4.5 6 L4.5 11 L0.5 7Z" fill="#4a7ad0"/></svg>
<div class="wrow" style="left:1031px;top:870px;transform:scaleX(0.95)">[3]</div>
<div class="a" style="left:1167px;top:870px;width:132px;height:19px;background:#00a89c"></div>
<div class="wrow" style="left:1170px;top:870px;transform:scaleX(0.92)">1070</div>
<div class="wrow" style="left:1303px;top:870px;transform:scaleX(0.95)">int</div>
<div class="a" style="left:1166px;top:909px;width:267px;height:1px;background:#c8c8c8"></div>
<div class="a" style="left:1007px;top:890px;width:159px;height:19px;background:#f0f0f0"></div>
<div class="a" style="left:1300px;top:890px;width:132px;height:19px;background:#f0f0f0"></div>
<div class="a" style="left:973px;top:895px;width:10px;height:9px;border:1px solid #8a8a8a;border-radius:1px;background:#f8f8f8"></div>
<div class="a" style="left:975px;top:899px;width:6px;height:1px;background:#3a4a9a"></div>
<div class="doth" style="left:983px;top:899px;width:7px"></div>
<svg style="left:987px;top:890px" width="16" height="14" viewBox="0 0 16 14"><path d="M1 4 L4.5 0.5 L9 4 L5.5 7.5Z" fill="#e8c030" stroke="#b08a10" stroke-width="0.6"/><path d="M9 5 L12 2.5 L15 5 L12 7.5Z" fill="#e070e0" stroke="#a040a0" stroke-width="0.5"/><path d="M10 7 H7.5 V12.5 H10" fill="none" stroke="#6a7a9a" stroke-width="1.1"/><path d="M10 11 L12.5 8.5 L15 11 L12.5 13.5Z" fill="#5a9ae8" stroke="#2a5ab0" stroke-width="0.5"/></svg>
<div class="wrow" style="left:1010px;top:890px;transform:scaleX(0.95)">ADC_ConvertedData</div>
<div class="wrow" style="left:1170px;top:890px;transform:scaleX(0.92)">0x20000080 ADC_Con...</div>
<div class="wrow" style="left:1303px;top:890px;transform:scaleX(0.95)">int[4]</div>
<div class="a" style="left:1166px;top:929px;width:267px;height:1px;background:#c8c8c8"></div>
<div class="doth" style="left:998px;top:919px;width:12px"></div>
<svg style="left:1014px;top:911px" width="9" height="11" viewBox="0 0 9 11"><path d="M4.5 0.5 L8.5 4.5 L8.5 7 L4.5 11 L0.5 7 L0.5 4.5Z" fill="#8ab8f0"/><path d="M4.5 6 L8.5 4.5 L8.5 7 L4.5 11Z" fill="#1a3aa8"/><path d="M0.5 4.5 L4.5 6 L4.5 11 L0.5 7Z" fill="#4a7ad0"/></svg>
<div class="wrow" style="left:1031px;top:910px;transform:scaleX(0.95)">[0]</div>
<div class="wrow" style="left:1170px;top:910px;transform:scaleX(0.92)">26</div>
<div class="wrow" style="left:1303px;top:910px;transform:scaleX(0.95)">int</div>
<div class="a" style="left:1166px;top:949px;width:267px;height:1px;background:#c8c8c8"></div>
<div class="doth" style="left:998px;top:939px;width:12px"></div>
<svg style="left:1014px;top:931px" width="9" height="11" viewBox="0 0 9 11"><path d="M4.5 0.5 L8.5 4.5 L8.5 7 L4.5 11 L0.5 7 L0.5 4.5Z" fill="#8ab8f0"/><path d="M4.5 6 L8.5 4.5 L8.5 7 L4.5 11Z" fill="#1a3aa8"/><path d="M0.5 4.5 L4.5 6 L4.5 11 L0.5 7Z" fill="#4a7ad0"/></svg>
<div class="wrow" style="left:1031px;top:930px;transform:scaleX(0.95)">[1]</div>
<div class="wrow" style="left:1170px;top:930px;transform:scaleX(0.92)">3291</div>
<div class="wrow" style="left:1303px;top:930px;transform:scaleX(0.95)">int</div>
<div class="a" style="left:1166px;top:969px;width:267px;height:1px;background:#c8c8c8"></div>
<div class="doth" style="left:998px;top:959px;width:12px"></div>
<svg style="left:1014px;top:951px" width="9" height="11" viewBox="0 0 9 11"><path d="M4.5 0.5 L8.5 4.5 L8.5 7 L4.5 11 L0.5 7 L0.5 4.5Z" fill="#8ab8f0"/><path d="M4.5 6 L8.5 4.5 L8.5 7 L4.5 11Z" fill="#1a3aa8"/><path d="M0.5 4.5 L4.5 6 L4.5 11 L0.5 7Z" fill="#4a7ad0"/></svg>
<div class="wrow" style="left:1031px;top:950px;transform:scaleX(0.95)">[2]</div>
<div class="wrow" style="left:1170px;top:950px;transform:scaleX(0.92)">3291</div>
<div class="wrow" style="left:1303px;top:950px;transform:scaleX(0.95)">int</div>
<div class="a" style="left:1166px;top:989px;width:267px;height:1px;background:#c8c8c8"></div>
<div class="doth" style="left:998px;top:979px;width:12px"></div>
<svg style="left:1014px;top:971px" width="9" height="11" viewBox="0 0 9 11"><path d="M4.5 0.5 L8.5 4.5 L8.5 7 L4.5 11 L0.5 7 L0.5 4.5Z" fill="#8ab8f0"/><path d="M4.5 6 L8.5 4.5 L8.5 7 L4.5 11Z" fill="#1a3aa8"/><path d="M0.5 4.5 L4.5 6 L4.5 11 L0.5 7Z" fill="#4a7ad0"/></svg>
<div class="wrow" style="left:1031px;top:970px;transform:scaleX(0.95)">[3]</div>
<div class="a" style="left:1167px;top:970px;width:132px;height:19px;background:#00a89c"></div>
<div class="wrow" style="left:1170px;top:970px;transform:scaleX(0.92)">861</div>
<div class="wrow" style="left:1303px;top:970px;transform:scaleX(0.95)">int</div>
<div class="a" style="left:1166px;top:790px;width:1px;height:207px;background:#c8c8c8"></div>
<div class="a" style="left:1299px;top:790px;width:1px;height:207px;background:#c8c8c8"></div>
<div class="a" style="left:1432px;top:790px;width:1px;height:207px;background:#c8c8c8"></div>
<div class="a" style="left:1166px;top:789px;width:267px;height:1px;background:#c8c8c8"></div>
<div class="a" style="left:964px;top:990px;width:512px;height:7px;overflow:hidden"><div class="t" style="left:34px;top:3px;font-size:11.5px;color:#000">Enter expression</div></div>
<div class="a" style="left:964px;top:997px;width:127px;height:1px;background:#000"></div>
<div class="a" style="left:1091px;top:997px;width:53px;height:5px;background:#f0f0f0"></div>
<div class="a" style="left:1144px;top:997px;width:332px;height:1px;background:#000"></div>
<div class="a" style="left:1144px;top:997px;width:1px;height:5px;background:#000"></div>
<div class="a" style="left:970px;top:999px;width:10px;height:3px;background:#8090b0"></div>
<div class="a" style="left:1150px;top:999px;width:13px;height:3px;background:#4a78d8"></div>
</body></html>
